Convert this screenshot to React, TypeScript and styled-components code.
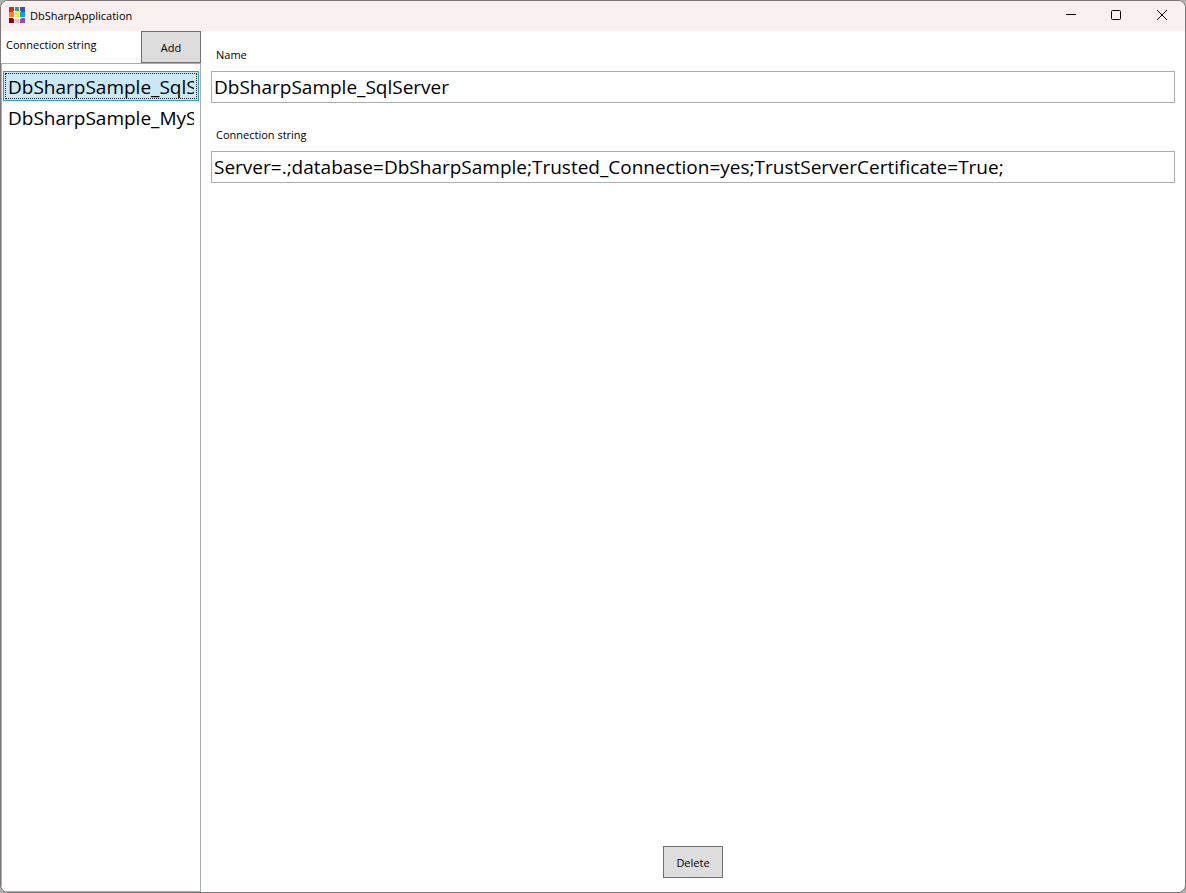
import React, { useState } from "react";
import styled, { createGlobalStyle, css } from "styled-components";

const GlobalStyle = createGlobalStyle`
  *, *::before, *::after { box-sizing: border-box; }
  body {
    margin: 0;
    background: #b5afae;
    color: #000;
    font: 11px/16px "Segoe UI", "Open Sans", "Noto Sans", sans-serif;
  }
`;

const Window = styled.div`
  display: flex;
  flex-direction: column;
  min-height: 100vh;
  border: 1px solid #7b7677;
  border-radius: 8px;
  background: #fff;
  overflow: hidden;
`;

const TitleBar = styled.header`
  display: flex;
  align-items: center;
  height: 30px;
  padding-left: 8px;
  background: #f9f0f0;
`;

const AppIcon = styled.svg`
  flex: none;
  width: 16px;
  height: 16px;
  margin: 0 5px 2px 0;
`;

const Title = styled.h1`
  flex: 1;
  margin: 0;
  font-size: 11px;
  font-weight: 400;
`;

const CaptionButton = styled.button`
  display: grid;
  place-items: center;
  width: 46px;
  height: 30px;
  padding: 0 0 2px;
  border: 0;
  background: transparent;
`;

const CaptionGlyph = styled.svg`
  width: 12px;
  height: 12px;
  fill: none;
  stroke: #000;
`;

const Body = styled.div`
  display: flex;
  flex: 1;
`;

const Sidebar = styled.aside`
  display: flex;
  flex-direction: column;
  flex: none;
  width: 200px;
`;

const SidebarHeader = styled.div`
  display: flex;
  justify-content: space-between;
`;

const SidebarTitle = styled.h2`
  margin: 0;
  padding: 6px 5px;
  font-size: 11px;
  font-weight: 400;
`;

const Button = styled.button`
  width: 60px;
  height: 32px;
  padding: 2px 0 0;
  border: 1px solid #707070;
  background: #ddd;
  color: #000;
  font: inherit;
`;

const ConnectionList = styled.ul`
  flex: 1;
  margin: 0;
  padding: 7px 1px;
  border: 1px solid #abadb3;
  list-style: none;
`;

const ConnectionItem = styled.button<{ $selected: boolean }>`
  display: block;
  width: 100%;
  height: 30px;
  margin-bottom: 1px;
  padding: 1px;
  border: 1px solid transparent;
  background: transparent;
  color: #000;
  font: inherit;
  font-size: 19px;
  text-align: left;
  ${({ $selected }) =>
    $selected &&
    css`
      border-color: #26a0da;
      background: #cbe8f6;
    `}
`;

const ItemText = styled.span<{ $selected: boolean }>`
  display: block;
  height: 26px;
  padding: 0 2px;
  border: 1px dotted ${({ $selected }) => ($selected ? "#1c1c1c" : "transparent")};
`;

const Clip = styled.span`
  display: block;
  overflow-x: clip;
  line-height: 27px;
  white-space: nowrap;
`;

const Details = styled.form`
  display: flex;
  flex: 1;
  flex-direction: column;
  min-width: 0;
  padding: 8px 10px 14px;
`;

const Label = styled.label`
  height: 32px;
  padding: 8px 5px;
`;

const TextBox = styled.input`
  width: 100%;
  height: 32px;
  margin-bottom: 16px;
  padding: 0 2px;
  border: 1px solid #abadb3;
  outline: 0;
  background: #fff;
  color: #000;
  font: inherit;
  font-size: 19px;
`;

const Actions = styled.div`
  display: flex;
  justify-content: center;
  margin-top: auto;
`;

const iconCells = [
  [0, 0, 5, 5, "#ed1c24"], [6, 0, 4, 4, "#22b14c"], [11, 0, 5, 5, "#3f48cc"],
  [0, 5, 5, 5, "#ff7f27"], [6, 5, 4, 5, "#fff200"], [11, 5, 5, 5, "#00a2e8"],
  [0, 11, 5, 5, "#880015"], [6, 12, 4, 4, "#ffaec9"], [11, 11, 5, 5, "#a349a4"],
] as const;

const initial = [
  {
    name: "DbSharpSample_SqlServer",
    value: "Server=.;database=DbSharpSample;Trusted_Connection=yes;TrustServerCertificate=True;",
  },
  { name: "DbSharpSample_MySql", value: "" },
];

export default function App() {
  const [connections, setConnections] = useState(initial);
  const [selected, setSelected] = useState(0);
  const current = connections[selected];

  const update = (patch: Partial<(typeof initial)[number]>) =>
    setConnections((all) => all.map((c, i) => (i === selected ? { ...c, ...patch } : c)));

  const add = () => {
    setConnections([...connections, { name: "", value: "" }]);
    setSelected(connections.length);
  };

  const remove = () => {
    setConnections(connections.filter((_, i) => i !== selected));
    setSelected(0);
  };

  return (
    <>
      <GlobalStyle />
      <Window>
        <TitleBar>
          <AppIcon viewBox="0 0 16 16" shapeRendering="crispEdges" aria-hidden="true">
            <rect width="16" height="16" fill="#fff" />
            {iconCells.map(([x, y, w, h, fill]) => (
              <rect key={fill} x={x} y={y} width={w} height={h} fill={fill} />
            ))}
            <path d="M4 4h8v1H4zM4 11h8v1H4z" fill="#fff" />
          </AppIcon>
          <Title>DbSharpApplication</Title>
          <CaptionButton type="button" aria-label="Minimize">
            <CaptionGlyph viewBox="0 0 12 12"><path d="M2 5.5h10" /></CaptionGlyph>
          </CaptionButton>
          <CaptionButton type="button" aria-label="Maximize">
            <CaptionGlyph viewBox="0 0 12 12"><rect x="1.5" y="1.5" width="9" height="9" rx="1" /></CaptionGlyph>
          </CaptionButton>
          <CaptionButton type="button" aria-label="Close">
            <CaptionGlyph viewBox="0 0 12 12"><path d="M1 1l10 10M11 1L1 11" /></CaptionGlyph>
          </CaptionButton>
        </TitleBar>
        <Body>
          <Sidebar>
            <SidebarHeader>
              <SidebarTitle>Connection string</SidebarTitle>
              <Button type="button" onClick={add}>Add</Button>
            </SidebarHeader>
            <ConnectionList>
              {connections.map((c, i) => (
                <li key={i}>
                  <ConnectionItem
                    type="button"
                    $selected={i === selected}
                    aria-pressed={i === selected}
                    onClick={() => setSelected(i)}
                  >
                    <ItemText $selected={i === selected}>
                      <Clip>{c.name}</Clip>
                    </ItemText>
                  </ConnectionItem>
                </li>
              ))}
            </ConnectionList>
          </Sidebar>
          <Details onSubmit={(e) => e.preventDefault()}>
            <Label htmlFor="name">Name</Label>
            <TextBox id="name" value={current?.name ?? ""} onChange={(e) => update({ name: e.target.value })} />
            <Label htmlFor="value">Connection string</Label>
            <TextBox id="value" value={current?.value ?? ""} onChange={(e) => update({ value: e.target.value })} />
            <Actions>
              <Button type="button" onClick={remove}>Delete</Button>
            </Actions>
          </Details>
        </Body>
      </Window>
    </>
  );
}
